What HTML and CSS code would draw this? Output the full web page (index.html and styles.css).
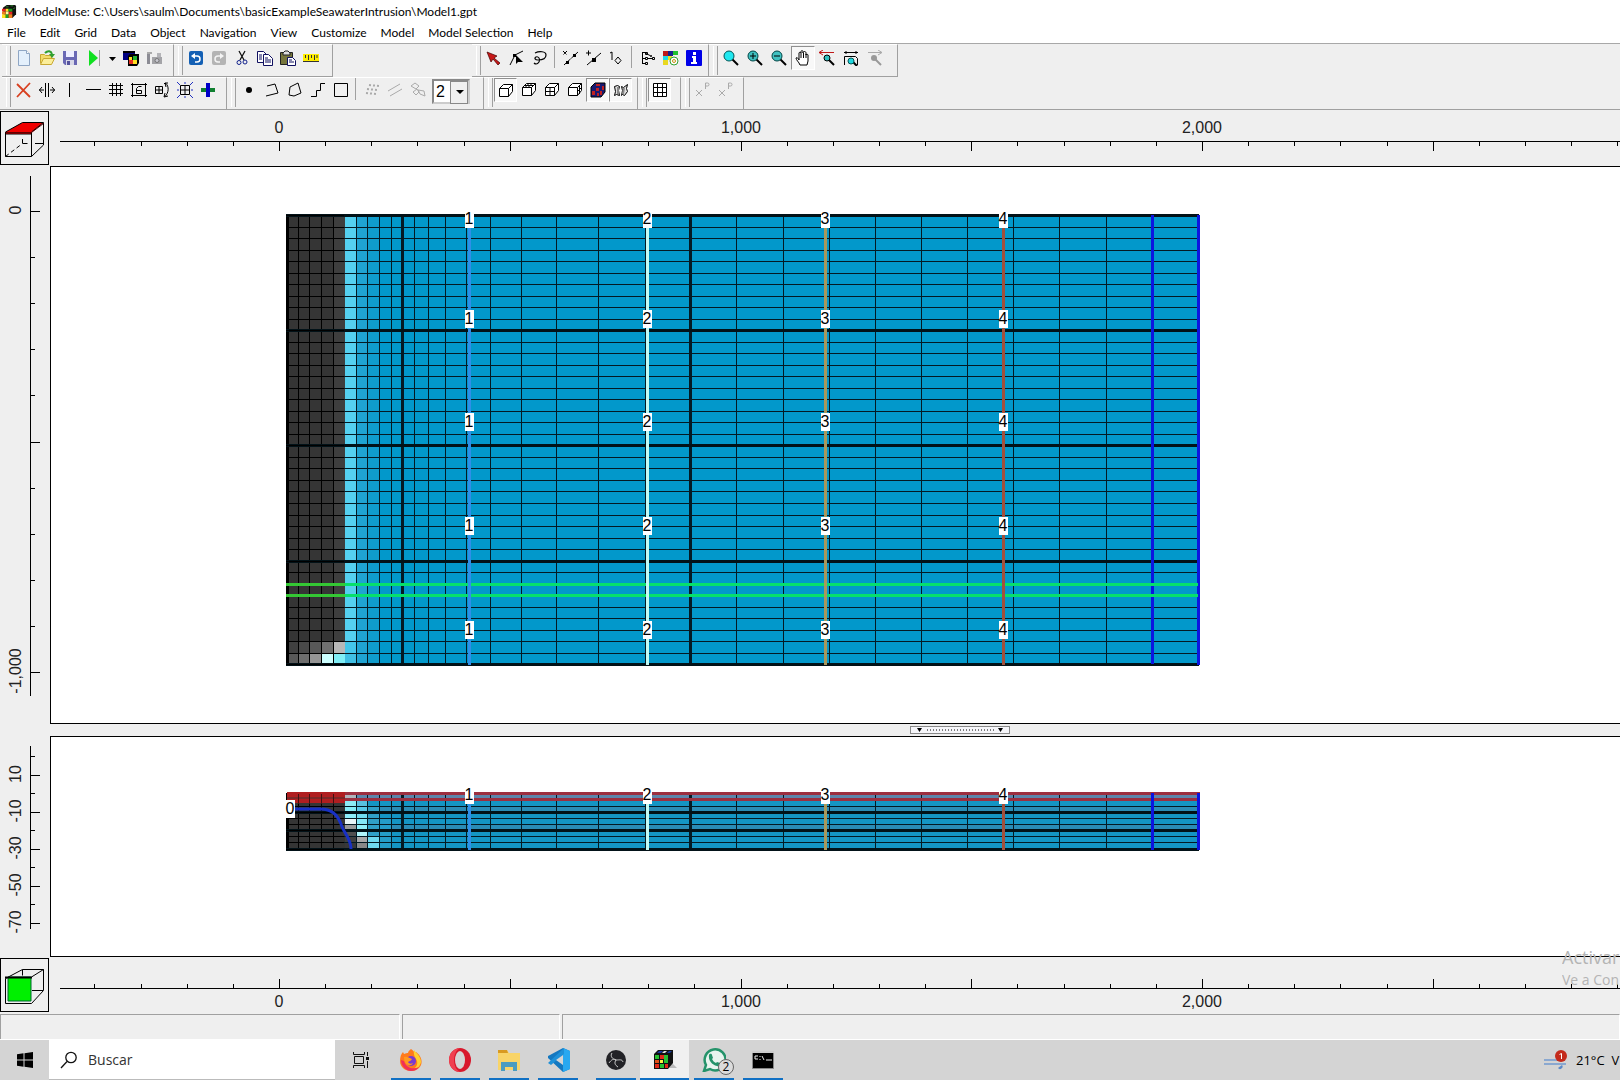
FILE: index.html
```html
<!DOCTYPE html>
<html lang="en">
<head>
<meta charset="UTF-8" />
<meta name="viewport" content="width=device-width, initial-scale=1" />
<title>ModelMuse</title>
<link rel="stylesheet" href="styles.css">
</head>
<body>

<header class="titlebar">
  <svg class="app-icon" viewBox="0 0 16 16"><path d="M1 4l4-3h9l1 1v9l-4 4H2z" fill="#111"/><path d="M4 3h3M9 2h3M12 5l2-1" stroke="#2a8a2a" stroke-width="1"/><path fill="#e82020" d="M0 5h4v3H0zM7 8h4v3H7z"/><path fill="#ffe020" d="M4 5h3v3H4zM0 11h4v4H0z"/><path fill="#20a020" d="M7 5h4v3H7zM4 11h3v4H4z"/><path fill="#fff8a0" d="M4 8h3v3H4z"/><path fill="#f08020" d="M0 8h4v3H0zM7 11h4v4H7z"/></svg>
  <span>ModelMuse: C:\Users\saulm\Documents\basicExampleSeawaterIntrusion\Model1.gpt</span>
</header>

<nav class="menubar">
  <button type="button">File</button>
  <button type="button">Edit</button>
  <button type="button">Grid</button>
  <button type="button">Data</button>
  <button type="button">Object</button>
  <button type="button">Navigation</button>
  <button type="button">View</button>
  <button type="button">Customize</button>
  <button type="button">Model</button>
  <button type="button">Model Selection</button>
  <button type="button">Help</button>
</nav>

<div class="toolbars">
  <div class="toolrow">
    <div class="band band-file">
      <button type="button" title="New"><svg viewBox="0 0 16 16"><path d="M2.500.5h8l3 3v12h-11z" fill="#e4f0fc" stroke="#8fa6c4"/><path d="M10.500.5v3h3" fill="#fff" stroke="#8fa6c4"/></svg></button>
      <button type="button" title="Open"><svg viewBox="0 0 16 16"><path d="M1.500 13.500v-9h4l1 1h6v3" fill="#f2dc6a" stroke="#c8a832"/><path d="M1.500 14.500l3-6h11l-3 6z" fill="#fbee9a" stroke="#c8a832"/><path d="M6 3c3-3 6-2 7 1" fill="none" stroke="#30a030" stroke-width="2"/><path d="M10 4h6l-3 4z" fill="#30a030"/></svg></button>
      <button type="button" title="Save"><svg viewBox="0 0 16 16"><path d="M1 1h14v14H3l-2-2z" fill="#6a68b4"/><path d="M4 1h8v6H4z" fill="#eef"/><path d="M4 10h8v5H4z" fill="#d8d8e8"/><path d="M5 11h3v4H5z" fill="#55539c"/></svg></button>
      <button type="button" title="Run"><svg viewBox="0 0 16 16"><path d="M4 0l9 8-9 8z" fill="#10e020"/><path d="M14.500 0v16" stroke="#a0a0a0"/></svg></button>
      <button type="button" class="drop" title="Run options"><svg viewBox="0 0 16 16"><path d="M5 7h7l-3.500 4z"/></svg></button>
      <button type="button" title="Model"><svg viewBox="0 0 16 16"><path d="M0 1h12v9H0z" fill="#000080"/><path d="M0 1h12v2H0z"/><path d="M5 6l2-2h9v9l-2 3H5z"/><path d="M6 7h3v3H6zM10 10h4v4h-4z" fill="#ffe020"/><path d="M10 6h4v4h-4z" fill="#20b030"/><path d="M6 10h4v4H6z" fill="#e83020"/></svg></button>
      <button type="button" title="Image" disabled><svg viewBox="0 0 16 16"><path d="M1 4h3v10H1z" fill="#8c8c94"/><path d="M1 3h5" stroke="#aaa" stroke-width="2"/><path d="M6 7h10v7H6z" fill="#a4a4a8"/><path d="M11 3h4v4h-4z" fill="#b4b4b8"/><circle cx="11" cy="10.500" r="2" fill="#c8c8d0" stroke="#777"/></svg></button>
    </div>
    <div class="band band-edit">
      <button type="button" title="Undo"><svg viewBox="0 0 16 16"><rect x="1" y="1" width="14" height="14" rx="2" fill="#1460b4"/><path d="M5 6h4a2.500 2.500 0 0 1 0 6H7" fill="none" stroke="#fff" stroke-width="1.500"/><path d="M3 6l4-3v6z" fill="#fff"/></svg></button>
      <button type="button" title="Redo"><svg viewBox="0 0 16 16"><rect x="1" y="1" width="14" height="14" rx="2" fill="#b4b4b4"/><path d="M11 6H7a2.500 2.500 0 0 0 0 6h2" fill="none" stroke="#f4f4f4" stroke-width="1.500"/><path d="M13 6L9 3v6z" fill="#f4f4f4"/></svg></button>
      <button type="button" title="Cut"><svg viewBox="0 0 16 16" fill="none"><path d="M5 1l5 9M11 1L6 10" stroke="#111" stroke-width="1.300"/><circle cx="5" cy="12.500" r="2" stroke="#10208c"/><circle cx="11" cy="12" r="2" stroke="#10208c"/></svg></button>
      <button type="button" title="Copy"><svg viewBox="0 0 16 16" fill="#fff" stroke="#101060"><path d="M.5 1.500h6l3 3v8h-9z"/><path d="M6.500 4.500h5l4 4v7h-9z"/><path d="M2 5h3M2 7h3M2 9h3M8 8h3M8 10h6M8 12h6"/></svg></button>
      <button type="button" title="Paste"><svg viewBox="0 0 16 16"><path d="M.5 2.500h12v12H.5z" fill="#76763c" stroke="#222"/><path d="M3 3l2-2h3l2 2v2H3z" fill="#ddd" stroke="#222"/><path d="M7.500 7.500h5l3 3v5h-8z" fill="#fff" stroke="#101060"/><path d="M9 10h3M9 12h5" stroke="#101060"/></svg></button>
      <button type="button" title="Ruler"><svg viewBox="0 0 16 16"><path d="M0 4h16v7H0z" fill="#ffee00"/><path d="M0 11.500h16M2.500 5v3M5.500 5v5M8.500 5v3M11.500 5v5M14 5v3" stroke="#333"/></svg></button>
    </div>
    <div class="band band-select">
      <button type="button" title="Select"><svg viewBox="0 0 16 16"><path d="M1 2l10 4-3 2 6 5-2 2-5-6-2 3z" fill="#c81818" stroke="#400" stroke-width=".7"/></svg></button>
      <button type="button" title="Select points"><svg viewBox="0 0 16 16"><path d="M1 15L6 5l8-4" fill="none" stroke="#000"/><path d="M4 4h3v3H4z"/><path d="M7 5v9l2-2h5z"/></svg></button>
      <button type="button" title="Lasso"><svg viewBox="0 0 16 16" fill="none" stroke="#000" stroke-width="1.200"><path d="M3 3c4-2 11-2 11 2s-5 5-8 5-4-2-2-3 5 2 3 5-4 2-5 1"/></svg></button>
      <i class="sep"></i>
      <button type="button" title="Delete segment"><svg viewBox="0 0 16 16"><path d="M0 1l4 4M4 1L0 5M1 15L15 2" stroke="#000" stroke-dasharray="4 1"/><path d="M3 11h3v3H3zM10 4h3v3h-3z"/></svg></button>
      <button type="button" title="Insert point"><svg viewBox="0 0 16 16"><path d="M0 3h5M2.500.5v5M1 15L15 3" stroke="#000"/><path d="M6 8h4v4H6z"/></svg></button>
      <button type="button" title="Vertex value"><svg viewBox="0 0 16 16" fill="none" stroke="#000"><path d="M1 3l2-1v8"/><path d="M9 7l3 3.500L9 14l-3-3.500z"/></svg></button>
      <i class="sep"></i>
      <button type="button" title="Data sets"><svg viewBox="0 0 16 16" fill="none" stroke="#000"><path d="M2.500 2v12M2 2.500h4M2 8.500h4M2 13.500h4M6 3.500l4 2M8 8.500h4"/><path d="M5.500 2.500h2v2h-2zM5.500 7.500h2v2h-2zM12.500 7.500h2v2h-2zM5.500 12.500h2v2h-2zM10.500 5.500h1v1h-1z"/></svg></button>
      <button type="button" title="Color grid"><svg viewBox="0 0 16 16"><path d="M0 1h5v5H0z" fill="#c01818"/><path d="M5 1h5v5H5z" fill="#182090"/><path d="M10 1h5v4h-5z" fill="#20c030"/><path d="M0 6h5v4H0z" fill="#20d8e8"/><path d="M5 6h4v4H5z" fill="#e8e020"/><path d="M0 10h5v5H0z" fill="#e8d820"/><circle cx="11" cy="11" r="4" fill="#fff" stroke="#30a030"/><circle cx="11" cy="11" r="1.500" fill="none" stroke="#c89010"/></svg></button>
      <button type="button" title="Information"><svg viewBox="0 0 16 16"><rect width="16" height="16" rx="1" fill="#0000e8"/><path d="M7 2h3v3H7zM6 6h4v6h1v2H5v-2h2V8H6z" fill="#fff"/></svg></button>
    </div>
    <div class="band band-zoom">
      <button type="button" title="Zoom"><svg viewBox="0 0 16 16"><path d="M9 9l6 6" stroke="#000" stroke-width="2"/><circle cx="6" cy="6" r="5" fill="#20e8f0" stroke="#055"/></svg></button>
      <button type="button" title="Zoom in"><svg viewBox="0 0 16 16"><path d="M9 9l6 6" stroke="#000" stroke-width="2"/><circle cx="6" cy="6" r="5" fill="#40c0c0" stroke="#044"/><path d="M3 6h6M6 3v6" stroke="#000"/></svg></button>
      <button type="button" title="Zoom out"><svg viewBox="0 0 16 16"><path d="M9 9l6 6" stroke="#000" stroke-width="2"/><circle cx="6" cy="6" r="5" fill="#40c0c0" stroke="#044"/><path d="M3 6h6" stroke="#000"/></svg></button>
      <button type="button" class="on" title="Pan"><svg viewBox="0 0 16 16"><path d="M5 15c-1-3-4-5-4-7 1-1 2 0 3 2V3c0-1 2-1 2 0V2c0-2 2-2 2 0v1c0-2 3-2 3 0v2c0-1 2-1 2 0v6l-1 4z" fill="#fff" stroke="#000"/><path d="M6 3v5M8.500 3v5M11 4v4" stroke="#000"/></svg></button>
      <button type="button" title="Restore zoom"><svg viewBox="0 0 16 16"><path d="M0 2.500h15M4 0L0 2.500 4 5" fill="none" stroke="#c01818"/><path d="M9 9l6 6" stroke="#000" stroke-width="2"/><circle cx="8" cy="8" r="3" fill="#30c0c0" stroke="#000"/></svg></button>
      <button type="button" title="Zoom extents"><svg viewBox="0 0 16 16"><path d="M1 2.500h14M3 1v3M13 1v3M1.500 15V6.500h11l2 2V15" fill="none" stroke="#000"/><path d="M10 12l4 4" stroke="#000" stroke-width="2"/><circle cx="8" cy="11" r="3" fill="#20d8e0" stroke="#055"/></svg></button>
      <button type="button" title="Redo zoom" disabled><svg viewBox="0 0 16 16"><path d="M1 2.500h14M11 0l4 2.500L11 5" fill="none" stroke="#aaa"/><path d="M8 9l6 6" stroke="#999" stroke-width="2"/><circle cx="7" cy="8" r="3" fill="#999"/></svg></button>
    </div>
  </div>

  <div class="toolrow">
    <div class="band band-grid">
      <button type="button" title="Delete"><svg viewBox="0 0 16 16"><path d="M1 2l13 13M14 1L1 15" stroke="#d84020" stroke-width="1.800"/></svg></button>
      <button type="button" title="Move"><svg viewBox="0 0 16 16" fill="none" stroke="#000"><path d="M6.500 1v14M9.500 1v14M0 8h5M11 8h5M3 5L.5 8 3 11M13 5l2.500 3-2.500 3"/></svg></button>
      <button type="button" title="Add column"><svg viewBox="0 0 16 16"><path d="M7.500 1v14" stroke="#000"/></svg></button>
      <button type="button" title="Add row"><svg viewBox="0 0 16 16"><path d="M1 7.500h15" stroke="#000"/></svg></button>
      <button type="button" title="Subdivide"><svg viewBox="0 0 16 16"><path d="M1 3.500h14M1 7.500h14M1 11.500h14M4.500 1v13M8.500 1v13M12.500 1v13" stroke="#000"/></svg></button>
      <button type="button" title="Set widths"><svg viewBox="0 0 16 16" fill="none" stroke="#000"><path d="M1.500 1v14M14.500 1v14M0 2.500h16M0 13.500h16"/><path d="M10.500 4.500h-3l-2 2v5h5v-3h-5"/></svg></button>
      <button type="button" title="Rotate grid"><svg viewBox="0 0 16 16" fill="none" stroke="#000"><path d="M1.500 4.500h7v7h-7zM5 4.500v7M1.500 8h7M10 1.500h2c3 3 3 9-1 13M11 11l-1 4 4-1M12 5l-1-4h3"/></svg></button>
      <button type="button" title="Generate grid"><svg viewBox="0 0 16 16" fill="none"><path d="M3.500 3.500h9v9h-9zM8 3.500v9M3.500 8h9" stroke="#000"/><path d="M0 0l3 3M13 3l3-3M0 16l3-3M13 13l3 3M8 0v2M8 14v2M0 8h2M14 8h2" stroke="#2030c0"/></svg></button>
      <button type="button" title="Axis"><svg viewBox="0 0 16 16"><path d="M1 6h14v4H1z" fill="#108030"/><path d="M6 1h4v14H6z" fill="#0000c8"/></svg></button>
    </div>
    <div class="band band-draw">
      <button type="button" title="Point"><svg viewBox="0 0 16 16"><circle cx="8" cy="8" r="3"/></svg></button>
      <button type="button" title="Line"><svg viewBox="0 0 16 16" fill="none" stroke="#000"><path d="M3 4l8-2 3 9-12 3"/></svg></button>
      <button type="button" title="Polygon"><svg viewBox="0 0 16 16" fill="none" stroke="#000"><path d="M3 5l8-4 3 10-7 3-5-1z"/></svg></button>
      <button type="button" title="Straight line"><svg viewBox="0 0 16 16" fill="none" stroke="#000"><path d="M1 14.500h5.500v-6h4v-7H15"/></svg></button>
      <button type="button" title="Rectangle"><svg viewBox="0 0 16 16" fill="none" stroke="#000"><path d="M1.500 1.500h13v13h-13z"/></svg></button>
      <i class="sep"></i>
      <button type="button" title="Points" disabled><svg viewBox="0 0 16 16"><path d="M5 3l10 1M3 7l10 1M2 11l10 1" stroke="#aaa" stroke-width="2" stroke-dasharray="2 2"/></svg></button>
      <button type="button" title="Lines" disabled><svg viewBox="0 0 16 16"><path d="M1 9l12-7M3 14l12-7" stroke="#aaa"/></svg></button>
      <button type="button" title="Polygons" disabled><svg viewBox="0 0 16 16" fill="none" stroke="#aaa"><path d="M1 4l4-3 4 3-3 3zM3 10l4-3 2 3-3 3zM8 8l6 1 1 5-5-2z"/></svg></button>
      <label class="combo" title="Vertices"><select aria-label="Edges"><option>2</option></select></label>
    </div>
    <div class="band band-view">
      <button type="button" class="on" title="Show domain"><svg viewBox="0 0 16 16" fill="#fff" stroke="#000"><path d="M1.500 6.500l4-4h9v7l-4 5h-9z"/><path d="M1.500 6.500h9v8M10.500 6.500l4-4" fill="none"/></svg></button>
      <button type="button" title="Top view"><svg viewBox="0 0 16 16" fill="#fff" stroke="#000"><path d="M1.500 5.500l4-4h9v7l-4 5h-9z"/><path d="M1.500 5.500h9v8M10.500 5.500l4-4M4 5.500l4-4M7 5.500l4-4M3 3.500h9" fill="none"/></svg></button>
      <button type="button" title="Front view"><svg viewBox="0 0 16 16" fill="#fff" stroke="#000"><path d="M1.500 5.500l4-4h9v7l-4 5h-9z"/><path d="M1.500 5.500h9v8M10.500 5.500l4-4M6 5.500v8M1.500 9.500h9" fill="none"/></svg></button>
      <button type="button" title="Side view"><svg viewBox="0 0 16 16" fill="#fff" stroke="#000"><path d="M1.500 5.500l4-4h9v7l-4 5h-9z"/><path d="M1.500 5.500h9v8M10.500 5.500l4-4M12.500 3v9M10.500 9.500l4-4" fill="none"/></svg></button>
      <button type="button" class="on" title="3D grid"><svg viewBox="0 0 16 16"><path d="M1 5l4-4h10v9l-4 5H1z" fill="#181870" stroke="#000"/><path d="M2 9h3v4H2zM6 6h3v3H6zM10 9h2v4h-2zM12 4h2v4h-2zM6 2h4v2H6zM7 11h2v3H7z" fill="#c02020"/></svg></button>
      <button type="button" class="on" title="3D objects"><svg viewBox="0 0 16 16" fill="#e0e0e0" stroke="#000"><path d="M1.500 4.500l3-1 2 1-1 4 1 5-3-1-2 1 1-4z"/><path d="M8.500 4.500l2 1 4-3-1 4 1 3-3 4-2-1-1 1 1-5z"/><path d="M5 5v7M11 6l-1 6" stroke="#888" stroke-width="2"/></svg></button>
    </div>
    <div class="band band-shade">
      <button type="button" class="on" title="Show grid"><svg viewBox="0 0 16 16" fill="#fff" stroke="#000"><path d="M1.500 1.500h13v13h-13zM1.500 5.500h13M1.500 10.500h13M5.500 1.500v13M10.500 1.500v13"/></svg></button>
    </div>
    <div class="band band-point">
      <button type="button" title="Add parameter" disabled><svg viewBox="0 0 16 16" fill="none" stroke="#aaa"><path d="M1 8l6 6M7 8l-6 6M10.500 7V1h2a1.500 1.500 0 0 1 0 3h-2"/></svg></button>
      <button type="button" title="Remove parameter" disabled><svg viewBox="0 0 16 16" fill="none" stroke="#aaa"><path d="M1 8l6 6M7 8l-6 6M10.500 7V1h2a1.500 1.500 0 0 1 0 3h-2"/></svg></button>
    </div>
  </div>
</div>

<main class="workspace">
  <div class="corner corner-top">
    <svg viewBox="0 0 46 51"><path d="M4.500 20.500h26v24h-26zM42.500 11v22l-12 11.500" fill="none" stroke="#000"/><path d="M4.500 44.500l17-13" fill="none" stroke="#000" stroke-dasharray="4 3"/><path d="M21.500 31.500h5M34 31.500h8M21.500 27v4" stroke="#000"/><path d="M4.500 20l17-9.500h21l-12 9.500v2h-26z" fill="#f00000" stroke="#000"/><path d="M4.500 20.500h26l12-9" fill="none" stroke="#600"/></svg>
  </div>
  <svg class="ruler" id="rulerTop"></svg>

  <svg class="ruler" id="rulerLeft"></svg>
  <section class="view"><svg id="topView"></svg></section>

  <div class="splitter"><button type="button" title="Collapse"><svg viewBox="0 0 98 6"><path d="M6 1h5L8.500 5zM87 1h5l-2.500 4z"/><path d="M16 3h67" stroke="#000" stroke-dasharray="1 2"/></svg></button></div>

  <svg class="ruler" id="rulerFront"></svg>
  <section class="view"><svg id="frontView"></svg></section>

  <div class="corner corner-bottom">
    <svg viewBox="0 0 46 51"><path d="M4.500 19.500l17-9h21v21l-12 13h-26zM30.500 18l12-7.500M21.500 10.500v6M31 31.500h11" fill="none" stroke="#000"/><path d="M7 18h23v24H7z" fill="#00f000" stroke="#063"/><path d="M4 18.500h27" stroke="#000" stroke-width="2"/></svg>
  </div>
  <svg class="ruler" id="rulerBottom"></svg>

  <div class="watermark"><p class="big">Activar</p><p>Ve a Con</p></div>
</main>

<footer class="statusbar"><span></span><span></span><span></span></footer>

<div class="taskbar">
  <button type="button" class="start" title="Start"><svg viewBox="0 0 16 16"><path d="M0 2.300l6.500-1v6.200H0zM7.500 1.200L16 0v7.500H7.500zM0 8.500h6.500v6.200l-6.500-1zM7.500 8.500H16V16l-8.500-1.200z"/></svg></button>
  <label class="search">
    <svg viewBox="0 0 18 18" fill="none" stroke="#111" stroke-width="1.300"><circle cx="11" cy="6.500" r="5.200"/><path d="M7 10.500L1 17"/></svg>
    <input type="text" placeholder="Buscar">
  </label>
  <button type="button" class="task view-task" title="Task view"><svg viewBox="0 0 16 16" fill="none" stroke="#111"><path d="M1.500 4.500h9v7h-9zM.5 0v2.500h11V0M.5 16v-2.500h11V16M14.500 0v4M14.500 9v7"/><path d="M13 5h3v3h-3z" fill="#111" stroke="none"/></svg></button>
  <button type="button" class="task run" title="Firefox"><svg class="lg" viewBox="0 0 24 24"><path d="M12 1c2 1 3 3 4 4l1-1c4 3 7 8 5 13-2 4-6 6-10 6C6 23 1 19 1 13c0-4 1-7 3-9l1 2c2-1 3-1 4-1 0-2 2-3 3-4z" fill="#ff7a1c"/><path d="M15 2c1 2 7 6 7 12-1 5-5 8-9 8 4-2 6-5 5-9-1-3-4-5-3-11z" fill="#ffd030"/><path d="M2 12c0 6 5 11 10 11 3 0 6-1 8-4-6 3-13 1-15-6z" fill="#f03058"/><circle cx="12" cy="13" r="5" fill="#7a3ad0"/><path d="M5 9c3-1 5 1 8 2-1 2-3 2-4 3 1 2 3 2 5 1-2 4-9 3-9-6z" fill="#ff9a20"/></svg></button>
  <button type="button" class="task run" title="Opera"><svg class="lg" viewBox="0 0 24 24"><ellipse cx="12" cy="12" rx="11" ry="12" fill="#d8182c"/><path d="M12 0C4 1 1 7 1 12s4 12 11 12c-4-2-6-7-6-12S8 2 12 0z" fill="#f04050"/><ellipse cx="12" cy="12" rx="5" ry="9" fill="#d4d4d4"/></svg></button>
  <button type="button" class="task run" title="Explorer"><svg class="lg" viewBox="0 0 24 24"><path d="M1 2h9l2 3h11v17H1z" fill="#f8d468"/><path d="M1 2h9l1 3H1z" fill="#d89a20"/><path d="M4 14h16v9h-4v-4H8v4H4z" fill="#4a9cc0"/></svg></button>
  <button type="button" class="task run" title="Code"><svg class="lg" viewBox="0 0 24 24"><path d="M17 0l7 3v18l-7 3L2 10v-2l2-1z" fill="#1478c0"/><path d="M17 0v24L24 21V3z" fill="#28a8f0"/><path d="M2 15l3 2L18 6V0z" fill="#1e90d8"/><path d="M17 7v10l-7-5z" fill="#d4d4d4"/></svg></button>
  <button type="button" class="task run obs" title="OBS"><svg class="lg" viewBox="0 0 24 24" fill="none"><circle cx="12" cy="12" r="10" fill="#222226"/><path d="M8 5c-2 3 0 6 4 7 4 0 6-1 7 2M12 12c-2 3-1 5 2 7M12 12c-2-2-5 0-7 3" stroke="#c8c8c8"/></svg></button>
  <button type="button" class="task run active" title="ModelMuse"><svg class="lg" viewBox="0 0 24 24"><path d="M16 20h8l-5-5z" fill="#bbb"/><path d="M1 6l4-4h15v13l-5 6H1z" fill="#111"/><path d="M6 3h4L8 5H4zM16 3h3l-2 2h-3z" fill="#1838a0"/><path d="M11 3h3l-2 2H9z" fill="#ddd"/><path d="M2 7h4v4H2zM11 11h4v4h-4zM7 16h4v4H7zM11 7h4v4h-4z" fill="#28c030"/><path d="M7 7h4v4H7zM2 16h4v4H2zM12 16h3v4h-3z" fill="#e02818"/><path d="M2 12h4v3H2z" fill="#e05018"/><path d="M7 12h3v3H7z" fill="#fff040"/></svg></button>
  <button type="button" class="task run" title="WhatsApp"><svg class="lg" viewBox="0 0 24 24"><path d="M2 23l2-6a10.500 10.500 0 1 1 4 4z" fill="#e8f4ee" stroke="#24936a" stroke-width="2.500"/><path d="M7 7c1-2 3-1 3 0l1 3-1 1c1 2 2 3 4 4l1-1 3 1c1 2-1 4-3 3-5-1-9-6-8-11z" fill="#24936a"/></svg><span class="count">2</span></button>
  <button type="button" class="task run" title="Console"><svg class="lg" viewBox="0 0 24 24"><path d="M1.500 3.500h21v17h-21z" fill="#000" stroke="#888"/><path d="M1 3h22v2H1z" fill="#ccc"/><path d="M7 8H4v3h3M9 8v1M9 11v1M11 8l2 4M15 12h6" fill="none" stroke="#eee"/></svg></button>
  <button type="button" class="weather">
    <svg viewBox="0 0 26 22"><path d="M1 11h17M1 15h22" stroke="#8aa8d0" stroke-width="2"/><path d="M15 19a2.500 2.500 0 1 0 4-3z" fill="#5a88c8"/><circle cx="18" cy="7" r="6" fill="#c42b1c"/><path d="M16.500 5.500l2-1V10" fill="none" stroke="#fff"/></svg>
    <span>21°C&nbsp; V</span>
  </button>
</div>

<script src="app.js"></script>
</body>
</html>
```
FILE: styles.css
```css
* {
  box-sizing: border-box;
}
body {
  margin: 0;
  height: 100vh;
  display: flex;
  flex-direction: column;
  overflow: hidden;
  background: #efefef;
  font-family: "Open Sans", "Noto Sans", sans-serif;
  font-size: 12px;
  color: #000;
}
button {
  background: none;
  border: 0;
  padding: 0;
  font: inherit;
  color: inherit;
}
svg {
  display: block;
}

/* title and menu */
.titlebar {
  height: 23px;
  display: flex;
  align-items: center;
  gap: 7px;
  padding-left: 2px;
  background: #fff;
  font-family: Lato, sans-serif;
  font-size: 12px;
  white-space: nowrap;
}
.app-icon {
  width: 15px;
  height: 15px;
}
.menubar {
  height: 20px;
  display: flex;
  align-items: center;
  gap: 14px;
  padding: 0 0 1px 7px;
  background: #fff;
  font-family: Lato, sans-serif;
  font-size: 12px;
}

/* toolbars */
.toolbars {
  border-top: 1px solid #a8a8a8;
  border-bottom: 1px solid #a0a0a0;
}
.toolrow {
  display: flex;
  padding-left: 2px;
  height: 33px;
}
.toolrow + .toolrow {
  height: 32px;
}
.band {
  display: flex;
  align-items: flex-start;
  padding-top: 1px;
  border-right: 1px solid #a0a0a0;
  border-bottom: 1px solid #a0a0a0;
  border-top: 1px solid #fff;
}
.toolrow + .toolrow .band {
  padding-top: 0;
  border-bottom: 0;
}
.band::before {
  content: "";
  width: 3px;
  height: 29px;
  margin: 0 1px 0 4px;
  border-left: 1px solid #fff;
  border-right: 1px solid #a0a0a0;
}
.band button {
  width: 23px;
  height: 24px;
  display: flex;
  align-items: center;
  justify-content: center;
  border: 1px solid transparent;
}
.band button.on {
  background: #f8f8f8;
  border-color: #909090 #fff #fff #909090;
}
.band svg {
  width: 16px;
  height: 16px;
  flex: none;
}
.band .drop {
  width: 15px;
}
.sep {
  width: 8px;
  height: 22px;
  background: linear-gradient(#a0a0a0, #a0a0a0) 3px 0 / 1px 100% no-repeat;
}
.band-file { width: 172px; }
.band-edit { width: 159px; }
.band-select { width: 237px; margin-left: 139px; }
.band-zoom { width: 189px; }
.band-zoom button { width: 24px; }
.band-grid { width: 225px; }
.band-draw { width: 257px; }
.band-view { width: 154px; }
.band-shade { width: 43px; }
.band-point { width: 63px; }

.combo {
  position: relative;
  width: 38px;
  height: 25px;
  margin: 1px 0 0 3px;
  border: 2px solid #888;
  border-right-color: #ccc;
  border-bottom-color: #ccc;
}
.combo select {
  appearance: none;
  width: 100%;
  height: 100%;
  border: 0;
  padding: 0 0 0 2px;
  background: #fff;
  font: 16px "Liberation Sans", sans-serif;
}
.combo::after {
  content: "";
  position: absolute;
  top: 0;
  right: 0;
  width: 16px;
  height: 100%;
  border: 1px solid #888;
  background: #efefef;
  pointer-events: none;
}
.combo::before {
  content: "";
  position: absolute;
  z-index: 1;
  top: 9px;
  right: 4px;
  border: 4px solid transparent;
  border-top-color: #000;
  border-bottom: 0;
}

/* drawing area */
.workspace {
  position: relative;
  flex: 1;
  min-height: 0;
  display: grid;
  grid-template-columns: 50px minmax(0, 1fr);
  grid-template-rows: 56px minmax(0, 558fr) 12px minmax(0, 221fr) 57px;
}
.corner {
  width: 49px;
  height: 54px;
  margin-top: 1px;
  border: 1px solid #000;
}
.corner svg {
  width: 46px;
  height: 51px;
}
.ruler {
  width: 100%;
  height: 100%;
  overflow: hidden;
}
.ruler text,
.view text {
  font: 16px "Liberation Sans", sans-serif;
  text-anchor: middle;
}
.ruler text {
  fill: #222;
}
.view {
  border: 1px solid #000;
  border-right: 0;
  background: #fff;
  min-height: 0;
}
.view svg {
  width: 100%;
  height: 100%;
}
.splitter {
  grid-column: 1 / -1;
  display: flex;
  align-items: center;
  padding-left: 56.2%;
}
.splitter button {
  width: 100px;
  height: 8px;
  border: 1px solid #888;
  background: #f6f6fa;
}
.splitter svg {
  width: 98px;
  height: 6px;
}
.watermark {
  position: absolute;
  right: 0;
  bottom: 24px;
  width: 58px;
  overflow: hidden;
  white-space: nowrap;
  font-size: 14px;
  line-height: 20px;
  color: #b4b4b4;
}
.watermark p {
  margin: 0;
}
.watermark .big {
  font-size: 18px;
  line-height: 26px;
}

/* status bar */
.statusbar {
  height: 26px;
  display: grid;
  grid-template-columns: 400px 158px 1fr;
  gap: 2px;
  border-bottom: 1px solid #fff;
}
.statusbar span {
  border: 1px solid #a0a0a0;
  border-right-color: #fff;
  border-bottom: 0;
}

/* windows taskbar */
.taskbar {
  height: 40px;
  display: flex;
  background: #d4d4d4;
}
.start {
  width: 49px;
  display: flex;
  align-items: center;
  justify-content: center;
}
.start svg {
  width: 16px;
  height: 16px;
}
.search {
  width: 286px;
  display: flex;
  align-items: center;
  gap: 10px;
  padding-left: 11px;
  background: #fff;
  border-bottom: 1px solid #bbb;
}
.search svg {
  width: 18px;
  height: 18px;
}
.search input {
  flex: 1;
  min-width: 0;
  border: 0;
  padding: 0;
  outline: none;
  font: 14px "Open Sans", sans-serif;
}
.search input::placeholder {
  color: #333;
}
.task {
  position: relative;
  width: 49px;
  display: flex;
  align-items: center;
  justify-content: center;
}
.task svg {
  width: 16px;
  height: 16px;
}
.task svg.lg {
  width: 24px;
  height: 24px;
}
.view-task {
  width: 51px;
}
.obs {
  margin-left: 9px;
}
.task.run::after {
  content: "";
  position: absolute;
  left: 5px;
  right: 4px;
  bottom: 0;
  height: 2px;
  background: #1070c4;
}
.task.active {
  background: #f0f0f0;
}
.task.active::after {
  left: 0;
  right: 0;
}
.count {
  position: absolute;
  right: 4px;
  bottom: 5px;
  width: 16px;
  height: 16px;
  border: 1px solid #666;
  border-radius: 50%;
  background: #dcdcdc;
  font-size: 12px;
  line-height: 14px;
}
.weather {
  margin-left: auto;
  display: flex;
  align-items: center;
  gap: 7px;
  width: 77px;
  white-space: nowrap;
  font-size: 13px;
}
.weather svg {
  flex: none;
  width: 26px;
  height: 22px;
}
```
FILE: app.js
```js
const NS = 'http://www.w3.org/2000/svg';

function add(parent, name, attrs, text) {
  const el = document.createElementNS(NS, name);
  for (const key in attrs) el.setAttribute(key, attrs[key]);
  if (text !== undefined) el.textContent = text;
  parent.appendChild(el);
  return el;
}

function rect(svg, x, y, width, height, fill) {
  add(svg, 'rect', { x, y, width, height, fill, 'shape-rendering': 'crispEdges' });
}

// ---- rulers ----
// dir is +1 when the ticks hang below the line, -1 when they stand on it
function drawHorizontalRuler(id, lineY, dir, labelY) {
  const svg = document.getElementById(id);
  const width = svg.getBoundingClientRect().width;
  rect(svg, 10, lineY, width - 10, 1, '#000');
  for (let i = -4; 229 + i * 46.15 < width; i++) {
    const x = Math.round(229 + i * 46.15);
    const len = i % 5 === 0 ? 9 : 4;
    rect(svg, x, dir > 0 ? lineY : lineY - len, 1, len + 1, '#000');
    if (i % 10 === 0) add(svg, 'text', { x, y: labelY }, (i * 100).toLocaleString('en-US'));
  }
}

function drawVerticalRuler(id, from, to, ticks) {
  const svg = document.getElementById(id);
  rect(svg, 30, from, 1, to - from, '#000');
  ticks.forEach(t => {
    rect(svg, 30, t.y, t.major ? 10 : 5, 1, '#000');
    if (t.label !== undefined) {
      add(svg, 'text', { transform: `translate(21 ${t.y - 1}) rotate(-90)` }, t.label);
    }
  });
}

drawHorizontalRuler('rulerTop', 31, 1, 23);
drawHorizontalRuler('rulerBottom', 31, -1, 50);

const rowTicks = [];
for (let i = 0; i <= 10; i++) {
  rowTicks.push({
    y: Math.round(45 + i * 46.1),
    major: i % 5 === 0,
    label: i === 0 ? '0' : i === 10 ? '-1,000' : undefined
  });
}
drawVerticalRuler('rulerLeft', 10, 530, rowTicks);

const depthTicks = [];
for (let i = 0; i < 5; i++) {
  depthTicks.push({ y: 20 + i * 37, major: false });
  depthTicks.push({ y: 39 + i * 37, major: true, label: String(10 - i * 20) });
}
drawVerticalRuler('rulerFront', 10, 193, depthTicks);

// ---- model grid ----
const cols = [236, 247, 258, 270, 282, 294, 305, 316, 328, 340, 351, 363, 377, 394, 415, 439,
  470, 505, 547, 594, 639, 685, 732, 778, 824, 870, 916, 962, 1008, 1055, 1101, 1147];
const LEFT = cols[0];
const RIGHT = cols[cols.length - 1];
const contours = [
  { x: 418, label: '1', color: '#2f8fe8' },
  { x: 596, label: '2', color: '#c4fbf4' },
  { x: 774, label: '3', color: '#a8985c' },
  { x: 952, label: '4', color: '#a4503c' }
];

function cell(svg, rows, c, r, fill, span = 1) {
  rect(svg, cols[c], rows[r], cols[c + 1] - cols[c], rows[r + span] - rows[r], fill);
}

function drawLines(svg, rows, thickRows) {
  const top = rows[0];
  const bottom = rows[rows.length - 1];
  cols.forEach((x, i) => {
    // the bright column has no line on its left side
    if (i === 5) return;
    const thick = i % 10 === 0;
    rect(svg, thick ? x - 1 : x, top, thick ? 3 : 1, bottom - top, i < 5 ? '#000' : '#041a24');
  });
  rows.forEach((y, i) => {
    const thick = thickRows.includes(i);
    rect(svg, LEFT - 1, thick ? y - 1 : y, RIGHT - LEFT + 2, thick ? 3 : 1, thick ? '#021218' : '#041a24');
    rect(svg, LEFT - 1, y, cols[5] - LEFT, 1, '#000');
  });
}

function drawContours(svg, top, bottom, labelYs) {
  contours.forEach(c => {
    rect(svg, c.x - 1, top, 3, bottom - top, c.color);
    labelYs.forEach(y => drawLabel(svg, c.x, y, c.label));
  });
}

function drawLabel(svg, x, y, label) {
  rect(svg, x - 4, y - 9, 9, 18, '#fff');
  add(svg, 'text', { x, y: y + 5 }, label);
}

// top view
const plan = document.getElementById('topView');
const rows = [];
for (let i = 0; i <= 39; i++) rows.push(Math.round(48 + i * 11.52));
const last = rows[39];

rect(plan, LEFT, 48, RIGHT - LEFT, last - 48, '#0298cb');
rect(plan, LEFT, 48, cols[5] - LEFT, last - 48, '#353535');
cell(plan, rows, 4, 0, '#3e3e3e', 39);
cell(plan, rows, 5, 0, '#55d0f0', 39);
cell(plan, rows, 6, 0, '#1fa3d2', 39);
cell(plan, rows, 7, 0, '#0f9ccc', 39);
['#404040', '#494949', '#585858', '#707070', '#b8b8b8', '#44c6ea'].forEach((f, c) => cell(plan, rows, c, 37, f));
['#585858', '#6e6e6e', '#959595', '#ccffff', '#80eef6', '#40bfe4'].forEach((f, c) => cell(plan, rows, c, 38, f));
drawLines(plan, rows, [0, 10, 20, 30, 39]);
rect(plan, 1100, 48, 3, last - 48, '#0c14e0');
rect(plan, 1146, 48, 3, last - 47, '#0c14e0');
[32, 33].forEach(r => {
  rect(plan, LEFT - 1, rows[r] - 1, RIGHT - LEFT + 1, 3, '#06e06c');
  rect(plan, LEFT - 1, rows[r] - 1, cols[5] - LEFT + 1, 3, '#34c834');
});
drawContours(plan, 50, last + 1, [52, 152, 255, 359, 463]);

// front view
const front = document.getElementById('frontView');
const layers = [56, 62, 69, 75, 81, 87, 93, 99, 105, 112];

rect(front, LEFT, 56, RIGHT - LEFT, 56, '#1495c4');
[2, 5].forEach(r => rect(front, LEFT, layers[r], RIGHT - LEFT, 6, '#2a8cb6'));
rect(front, LEFT, 56, RIGHT - LEFT, 6, '#5c86ac');
rect(front, LEFT, 56, cols[5] - LEFT, 56, '#353535');
['#b0b4bc', '#8ceaf4', '#84ecf6', '#8ceefa', '#e8f4f6', '#989898', '#505050', '#404040', '#383838'].forEach((f, r) => cell(front, layers, 5, r, f));
['#58c0e0', '#58c8e8', '#70dcf0', '#84e8f8', '#90f0fa', '#b0f6fc', '#a8a8a8', '#888888'].forEach((f, r) => cell(front, layers, 6, r + 1, f));
cell(front, layers, 7, 2, '#30a0c8', 5);
cell(front, layers, 7, 7, '#70daf0', 2);
cell(front, layers, 8, 4, '#249cc8', 5);
drawLines(front, layers, [3, 6, 9]);
rect(front, LEFT, 55, cols[5] - LEFT, 11, '#b01e20');
rect(front, LEFT, 60, cols[5] - LEFT, 2, '#7c2828');
[0, 6].forEach(d => rect(front, cols[5], 55 + d, RIGHT - cols[5] + 2, 3, '#9c3040'));
for (let i = 1; i < 5; i++) rect(front, cols[i], 57, 1, 10, '#401010');
rect(front, 1100, 56, 3, 57, '#0c14e0');
rect(front, 1146, 56, 3, 57, '#0c14e0');
add(front, 'path', {
  d: 'M243 72H270C281 72 287 79 290 87C292 95 300 101 300 112',
  fill: 'none', stroke: '#1830c4', 'stroke-width': 3
});
drawContours(front, 60, 113, [58]);
drawLabel(front, 239, 72, '0');
```
